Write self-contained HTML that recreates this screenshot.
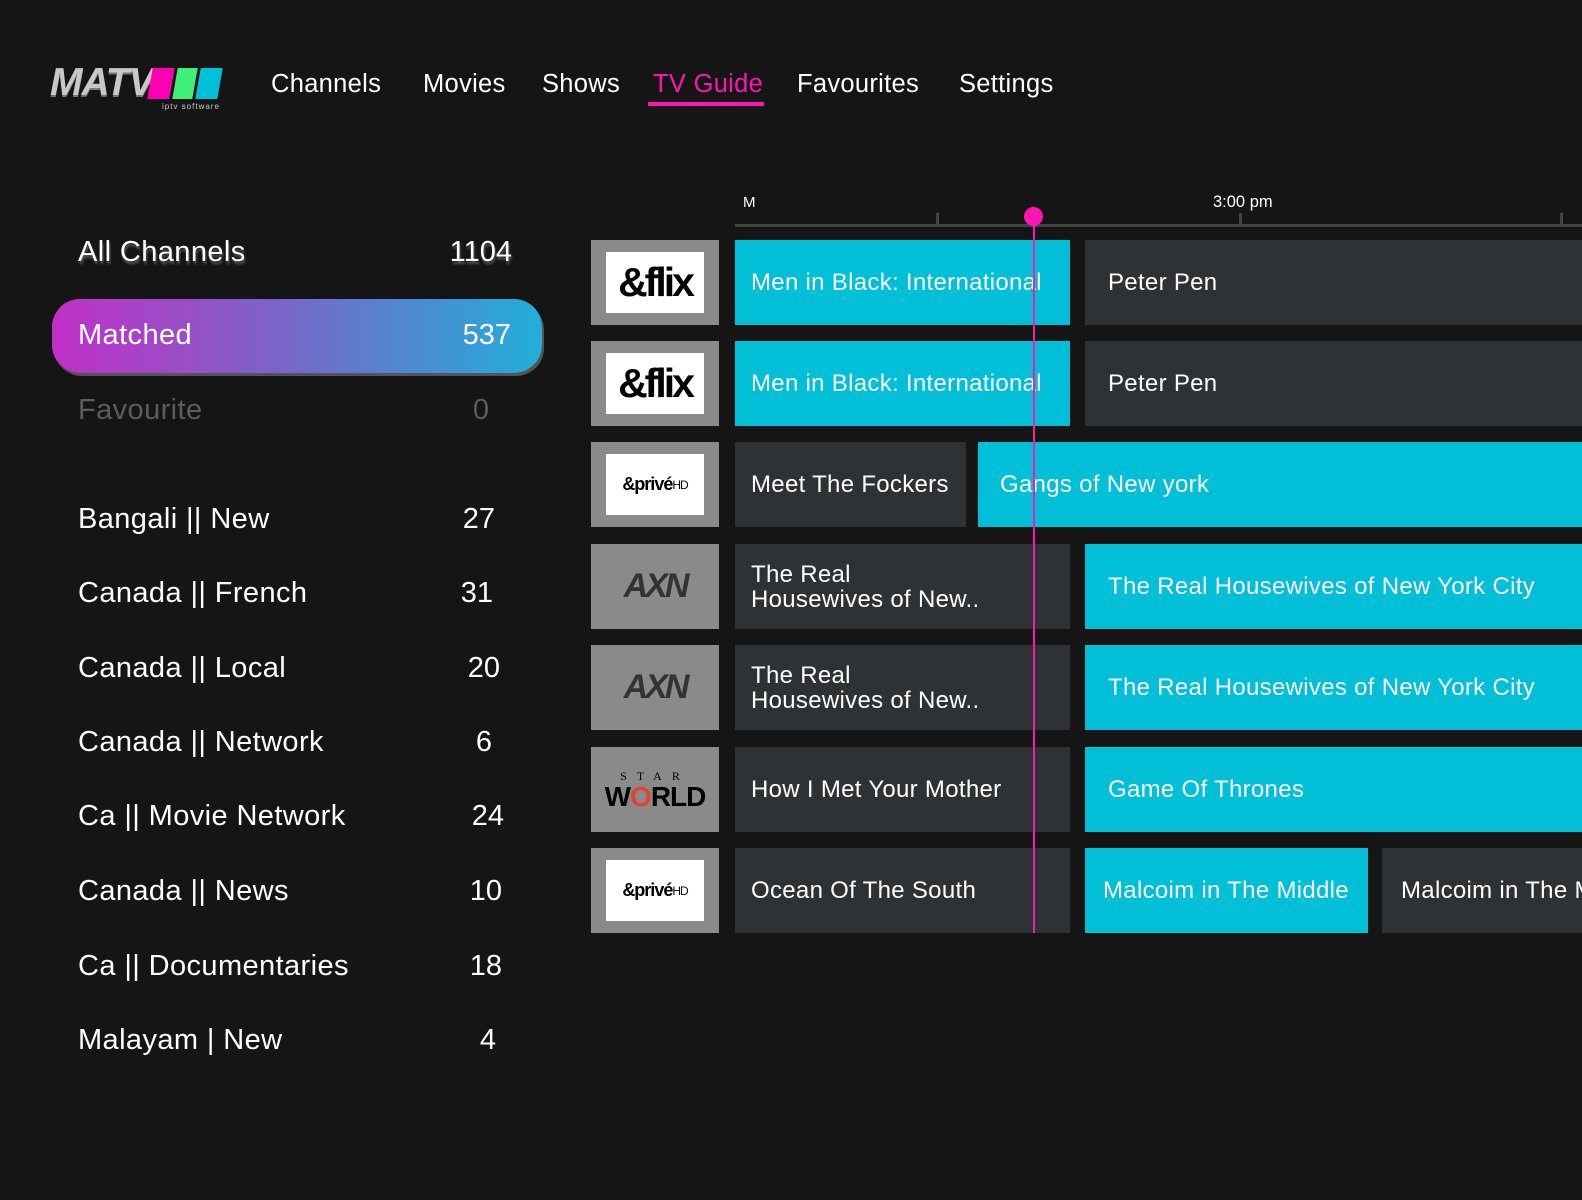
<!DOCTYPE html>
<html><head><meta charset="utf-8"><style>
*{margin:0;padding:0;box-sizing:border-box}
body{width:1582px;height:1200px;background:#151515;font-family:"Liberation Sans",sans-serif;color:#fff;position:relative;overflow:hidden}
.a{position:absolute;white-space:nowrap}
.nav{top:70px;font-size:25.5px;letter-spacing:0.3px}
.si{left:78px;font-size:29px;letter-spacing:0.4px;line-height:34px}
.sn{font-size:29px;text-align:right;width:90px;line-height:34px}
.logo{position:absolute;left:591px;width:128px;height:85px;background:#8a8a8a;display:flex;align-items:center;justify-content:center}
.wb{width:98px;height:61px;background:#fff;display:flex;align-items:center;justify-content:center;color:#000}
.c{position:absolute;height:85px;display:flex;align-items:center;padding-left:16px;font-size:24px;letter-spacing:0.3px;overflow:hidden;white-space:nowrap}
.cy{background:#00bfd6}
.dk{background:#2f3234}
</style></head><body>
<div class="a" style="left:50px;top:61px;font-size:39px;font-weight:900;font-style:italic;color:#c8c8c8;letter-spacing:-1px;text-shadow:0 2px 0 #777">MATV</div>
<div class="a" style="left:150px;top:68px;width:22px;height:31px;background:#ff00b4;transform:skewX(-10deg)"></div>
<div class="a" style="left:175px;top:68px;width:20px;height:31px;background:#3ef07a;transform:skewX(-10deg)"></div>
<div class="a" style="left:198px;top:68px;width:22px;height:31px;background:#00c0d8;transform:skewX(-10deg)"></div>
<div class="a" style="left:162px;top:102px;font-size:8px;color:#ccc;letter-spacing:1px">iptv software</div>
<div class="a nav" style="left:271px">Channels</div>
<div class="a nav" style="left:423px">Movies</div>
<div class="a nav" style="left:542px">Shows</div>
<div class="a nav" style="left:653px;color:#ff14b4">TV Guide</div>
<div class="a" style="left:648px;top:102px;width:116px;height:4px;background:#ff14b4"></div>
<div class="a nav" style="left:797px">Favourites</div>
<div class="a nav" style="left:959px">Settings</div>

<div class="a si" style="top:235px;text-shadow:1px 3px 2px #555">All Channels</div>
<div class="a sn" style="left:422px;top:235px;text-shadow:1px 3px 2px #555">1104</div>
<div class="a" style="left:52px;top:299px;width:490px;height:74px;border-radius:28px;background:linear-gradient(90deg,#c22fc7,#7d63c7 45%,#21afd8);box-shadow:2px 3px 0 #555"></div>
<div class="a si" style="top:318px">Matched</div>
<div class="a sn" style="left:421px;top:318px">537</div>
<div class="a si" style="top:393px;color:#5c5c5c">Favourite</div>
<div class="a sn" style="left:399px;top:393px;color:#5c5c5c">0</div>
<div class="a si" style="top:502px">Bangali || New</div><div class="a sn" style="left:405px;top:502px">27</div>
<div class="a si" style="top:576px">Canada || French</div><div class="a sn" style="left:403px;top:576px">31</div>
<div class="a si" style="top:651px">Canada || Local</div><div class="a sn" style="left:410px;top:651px">20</div>
<div class="a si" style="top:725px">Canada || Network</div><div class="a sn" style="left:402px;top:725px">6</div>
<div class="a si" style="top:799px">Ca || Movie Network</div><div class="a sn" style="left:414px;top:799px">24</div>
<div class="a si" style="top:874px">Canada || News</div><div class="a sn" style="left:412px;top:874px">10</div>
<div class="a si" style="top:949px">Ca || Documentaries</div><div class="a sn" style="left:412px;top:949px">18</div>
<div class="a si" style="top:1023px">Malayam | New</div><div class="a sn" style="left:406px;top:1023px">4</div>

<div class="a" style="left:743px;top:194px;font-size:15px">M</div>
<div class="a" style="left:1213px;top:193px;font-size:16.5px">3:00 pm</div>
<div class="a" style="left:735px;top:224px;width:847px;height:3px;background:#444"></div>
<div class="a" style="left:936px;top:213px;width:3px;height:12px;background:#444"></div>
<div class="a" style="left:1239px;top:213px;width:3px;height:12px;background:#444"></div>
<div class="a" style="left:1560px;top:213px;width:3px;height:12px;background:#444"></div>

<div class="logo" style="top:240px"><div class="wb" style="font-size:41px;font-weight:bold;letter-spacing:-3px">&amp;flix</div></div>
<div class="c cy" style="left:735px;top:240px;width:335px">Men in Black: International</div>
<div class="c dk" style="left:1085px;top:240px;width:497px;padding-left:23px">Peter Pen</div>
<div class="logo" style="top:341px"><div class="wb" style="font-size:41px;font-weight:bold;letter-spacing:-3px">&amp;flix</div></div>
<div class="c cy" style="left:735px;top:341px;width:335px">Men in Black: International</div>
<div class="c dk" style="left:1085px;top:341px;width:497px;padding-left:23px">Peter Pen</div>
<div class="logo" style="top:442px"><div class="wb" style="font-size:18px;font-weight:bold;letter-spacing:-1px">&amp;privé<span style="font-weight:normal;font-size:12px">HD</span></div></div>
<div class="c dk" style="left:735px;top:442px;width:231px">Meet The Fockers</div>
<div class="c cy" style="left:978px;top:442px;width:604px;padding-left:22px">Gangs of New york</div>
<div class="logo" style="top:544px"><span style="font-size:34px;font-weight:900;font-style:italic;color:#333;letter-spacing:-3px">AXN</span></div>
<div class="c dk" style="left:735px;top:544px;width:335px;white-space:normal;line-height:25px">The Real<br>Housewives of New..</div>
<div class="c cy" style="left:1085px;top:544px;width:497px;padding-left:23px">The Real Housewives of New York City</div>
<div class="logo" style="top:645px"><span style="font-size:34px;font-weight:900;font-style:italic;color:#333;letter-spacing:-3px">AXN</span></div>
<div class="c dk" style="left:735px;top:645px;width:335px;white-space:normal;line-height:25px">The Real<br>Housewives of New..</div>
<div class="c cy" style="left:1085px;top:645px;width:497px;padding-left:23px">The Real Housewives of New York City</div>
<div class="logo" style="top:747px;flex-direction:column;color:#000"><span style="font-family:'Liberation Serif',serif;font-size:12px;letter-spacing:10px">STAR</span><span style="font-size:28px;font-weight:900;letter-spacing:-1px;line-height:26px">W<span style="color:#e8412c">O</span>RLD</span></div>
<div class="c dk" style="left:735px;top:747px;width:335px">How I Met Your Mother</div>
<div class="c cy" style="left:1085px;top:747px;width:497px;padding-left:23px">Game Of Thrones</div>
<div class="logo" style="top:848px"><div class="wb" style="font-size:18px;font-weight:bold;letter-spacing:-1px">&amp;privé<span style="font-weight:normal;font-size:12px">HD</span></div></div>
<div class="c dk" style="left:735px;top:848px;width:335px">Ocean Of The South</div>
<div class="c cy" style="left:1085px;top:848px;width:283px;padding-left:18px">Malcoim in The Middle</div>
<div class="c dk" style="left:1382px;top:848px;width:200px;padding-left:19px">Malcoim in The Middle</div>

<div class="a" style="left:1033px;top:217px;width:2px;height:716px;background:#ff14b4"></div>
<div class="a" style="left:1024px;top:207px;width:19px;height:19px;border-radius:50%;background:#ff14b4"></div>
</body></html>
